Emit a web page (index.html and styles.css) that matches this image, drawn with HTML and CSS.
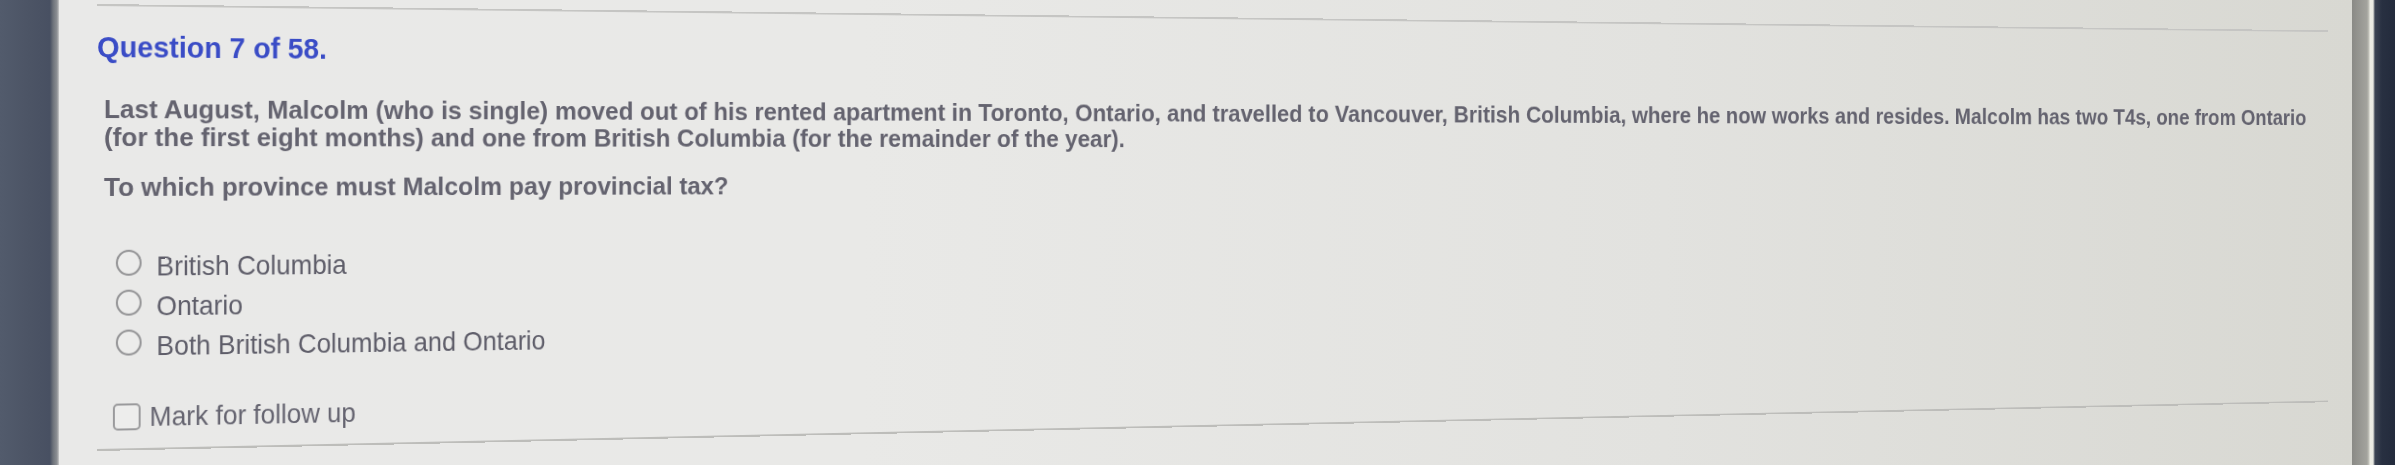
FILE: index.html
```html
<!DOCTYPE html>
<html lang="en">
<head>
<meta charset="utf-8">
<title>Question 7 of 58</title>
<link rel="stylesheet" href="styles.css">
</head>
<body>
<div class="frame">
  <div class="bezel-left"></div>
  <main class="screen">
    <section class="card">
      <h1 class="q-title">Question 7 of 58.</h1>
      <p class="q-text">Last August, Malcolm (who is single) moved out of his rented apartment in Toronto, Ontario, and travelled to Vancouver, British Columbia, where he now works and resides. Malcolm has two T4s, one from Ontario (for the first eight months) and one from British Columbia (for the remainder of the year).</p>
      <p class="q-prompt">To which province must Malcolm pay provincial tax?</p>
      <ul class="options">
        <li class="option"><span class="radio"></span><span class="opt-label">British Columbia</span></li>
        <li class="option"><span class="radio"></span><span class="opt-label">Ontario</span></li>
        <li class="option"><span class="radio"></span><span class="opt-label">Both British Columbia and Ontario</span></li>
      </ul>
      <div class="follow"><span class="checkbox"></span><span class="follow-label">Mark for follow up</span></div>
    </section>
  </main>
  <div class="bezel-right"></div>
</div>
</body>
</html>
```

FILE: styles.css
```css
html, body {
  margin: 0;
  padding: 0;
  overflow: hidden;
}

body {
  width: 2395px;
  height: 465px;
  font-family: "Liberation Sans", Arial, sans-serif;
  background: #262e3f;
}

.frame {
  display: flex;
  width: 2395px;
  height: 465px;
  overflow: hidden;
}

.bezel-left {
  flex: 0 0 59px;
  background: linear-gradient(to right, #525b6c 0, #4c5465 30px, #485062 50px, #6d727a 53px, #8c8f93 57px, #c9c9c9 59px);
}

.bezel-right {
  flex: 0 0 43px;
  background: linear-gradient(to right, #8a8a86 0, #a3a39d 15px, #c4c4bc 17px, #ecece4 18px, #e9e9e1 21px, #3a4252 23px, #283041 30px, #232b3c 43px);
}

.screen {
  flex: 1 1 auto;
  min-width: 0;
  overflow: hidden;
  padding: 4px 0 0 38px;
  background: linear-gradient(to right, #e9e9e8 0, #e9e9e7 35%, #e2e2df 70%, #d8d8d2 100%);
}

.card {
  box-sizing: border-box;
  width: 2695px;
  height: 447px;
  border-top: 2px solid #c5c5c3;
  border-bottom: 2px solid #bdbdba;
  padding: 25px 0 0 0;
  transform-origin: 0 157px;
  transform: perspective(1331px) rotateY(5.73deg);
}

.q-title {
  margin: 0;
  font-size: 29.2px;
  line-height: 32px;
  font-weight: bold;
  color: #3a4cc6;
}

.q-text {
  margin: 32px 0 0 7px;
  width: 2688px;
  font-size: 26.4px;
  line-height: 28px;
  font-weight: bold;
  color: #64636f;
}

.q-prompt {
  margin: 22px 0 0 7px;
  font-size: 26.4px;
  line-height: 28px;
  font-weight: bold;
  color: #64636f;
}

.options {
  list-style: none;
  margin: 46px 0 0 0;
  padding: 0;
}

.option {
  display: flex;
  align-items: center;
  height: 40px;
  font-size: 26.9px;
  line-height: 40px;
  color: #5e5d69;
}

.radio {
  box-sizing: border-box;
  flex: 0 0 26px;
  width: 26px;
  height: 26px;
  margin: 0 15px 8px 19px;
  border: 2px solid #939395;
  border-radius: 50%;
  background: #ececeb;
}

.follow {
  display: flex;
  align-items: center;
  height: 40px;
  margin-top: 31px;
  font-size: 26.9px;
  line-height: 40px;
  color: #656470;
}

.checkbox {
  box-sizing: border-box;
  flex: 0 0 28px;
  width: 28px;
  height: 27px;
  margin: 0 9px 2px 16px;
  border: 2px solid #9a9a9c;
  border-radius: 5px;
  background: #ededec;
}
```
